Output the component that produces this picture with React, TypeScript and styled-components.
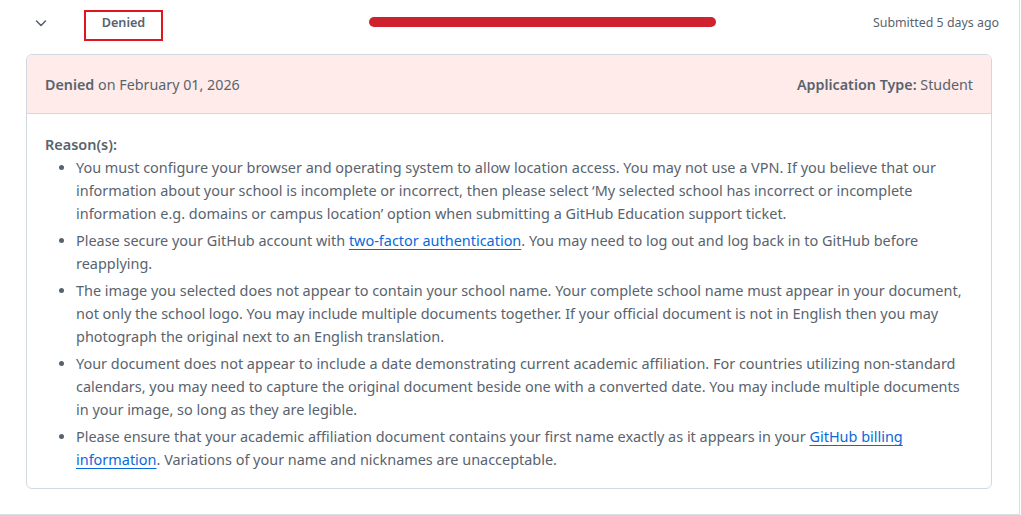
import React from "react";
import styled, { createGlobalStyle } from "styled-components";

const GlobalStyle = createGlobalStyle`
  html, body {
    margin: 0;
    padding: 0;
    background: #fff;
    font-family: "Noto Sans", "Open Sans", sans-serif;
    color: #59636e;
  }
`;

const Frame = styled.div`
  width: 1019px;
  height: 514px;
  border-right: 1px solid #d8dee4;
  border-bottom: 1px solid #d8dee4;
  box-sizing: content-box;
  overflow: hidden;
`;

const Row = styled.div`
  display: grid;
  grid-template-columns: 84px 285px 347px 1fr;
  align-items: center;
  height: 44px;
  padding-right: 20px;
`;

const Toggle = styled.div`
  display: flex;
  justify-content: center;
  width: 84px;
  svg {
    margin-left: -2px;
    margin-top: 1px;
  }
`;

const StatusLabel = styled.div`
  width: 79px;
  height: 31px;
  margin-top: 7px;
  box-sizing: border-box;
  border: 2px solid #e0161f;
  display: flex;
  align-items: center;
  justify-content: center;
  font-size: 12.6px;
  font-weight: 600;
  padding-bottom: 7px;
`;

const ProgressBar = styled.div`
  height: 10px;
  border-radius: 5px;
  background: #cf222e;
`;

const Submitted = styled.div`
  text-align: right;
  font-size: 12.4px;
`;

const Card = styled.div`
  margin: 10px 27px 0 26px;
  border: 1px solid #d1d9e0;
  border-radius: 6px;
  overflow: hidden;
`;

const CardHeader = styled.div`
  display: flex;
  justify-content: space-between;
  align-items: center;
  height: 58px;
  padding: 0 18px;
  background: #ffebe9;
  border-bottom: 1px solid #d1d9e0;
  font-size: 14.3px;
  b {
    font-weight: 600;
  }
`;

const CardBody = styled.div`
  padding: 19px 18px 17px;
  font-size: 14.45px;
  line-height: 23px;
`;

const Heading = styled.div`
  font-weight: 600;
`;

const Reasons = styled.ul`
  margin: 0;
  padding-left: 31px;
  li {
    margin-bottom: 4px;
  }
  li:last-child {
    margin-bottom: 0;
  }
`;

const Link = styled.a`
  color: #0969da;
  text-decoration: underline;
  text-underline-offset: 3px;
`;

const Chevron = () => (
  <svg width="16" height="16" viewBox="0 0 16 16" fill="none">
    <path d="M3.5 6l4.5 4.5L12.5 6" stroke="#59636e" strokeWidth="1.6" strokeLinecap="round" strokeLinejoin="round" />
  </svg>
);

export default function App() {
  return (
    <>
      <GlobalStyle />
      <Frame>
        <Row>
          <Toggle>
            <Chevron />
          </Toggle>
          <div>
            <StatusLabel>Denied</StatusLabel>
          </div>
          <ProgressBar />
          <Submitted>Submitted 5 days ago</Submitted>
        </Row>
        <Card>
          <CardHeader>
            <span>
              <b>Denied</b> on February 01, 2026
            </span>
            <span>
              <b>Application Type:</b> Student
            </span>
          </CardHeader>
          <CardBody>
            <Heading>Reason(s):</Heading>
            <Reasons>
              <li>
                You must configure your browser and operating system to allow location access. You may not use a VPN. If
                you believe that our information about your school is incomplete or incorrect, then please select ‘My
                selected school has incorrect or incomplete information e.g. domains or campus location’ option when
                submitting a GitHub Education support ticket.
              </li>
              <li>
                Please secure your GitHub account with <Link href="#">two-factor authentication</Link>. You may need to
                log out and log back in to GitHub before reapplying.
              </li>
              <li>
                The image you selected does not appear to contain your school name. Your complete school name must appear
                in your document, not only the school logo. You may include multiple documents together. If your official
                document is not in English then you may photograph the original next to an English translation.
              </li>
              <li>
                Your document does not appear to include a date demonstrating current academic affiliation. For countries
                utilizing non-standard calendars, you may need to capture the original document beside one with a
                converted date. You may include multiple documents in your image, so long as they are legible.
              </li>
              <li>
                Please ensure that your academic affiliation document contains your first name exactly as it appears in
                your <Link href="#">GitHub billing information</Link>. Variations of your name and nicknames are
                unacceptable.
              </li>
            </Reasons>
          </CardBody>
        </Card>
      </Frame>
    </>
  );
}
